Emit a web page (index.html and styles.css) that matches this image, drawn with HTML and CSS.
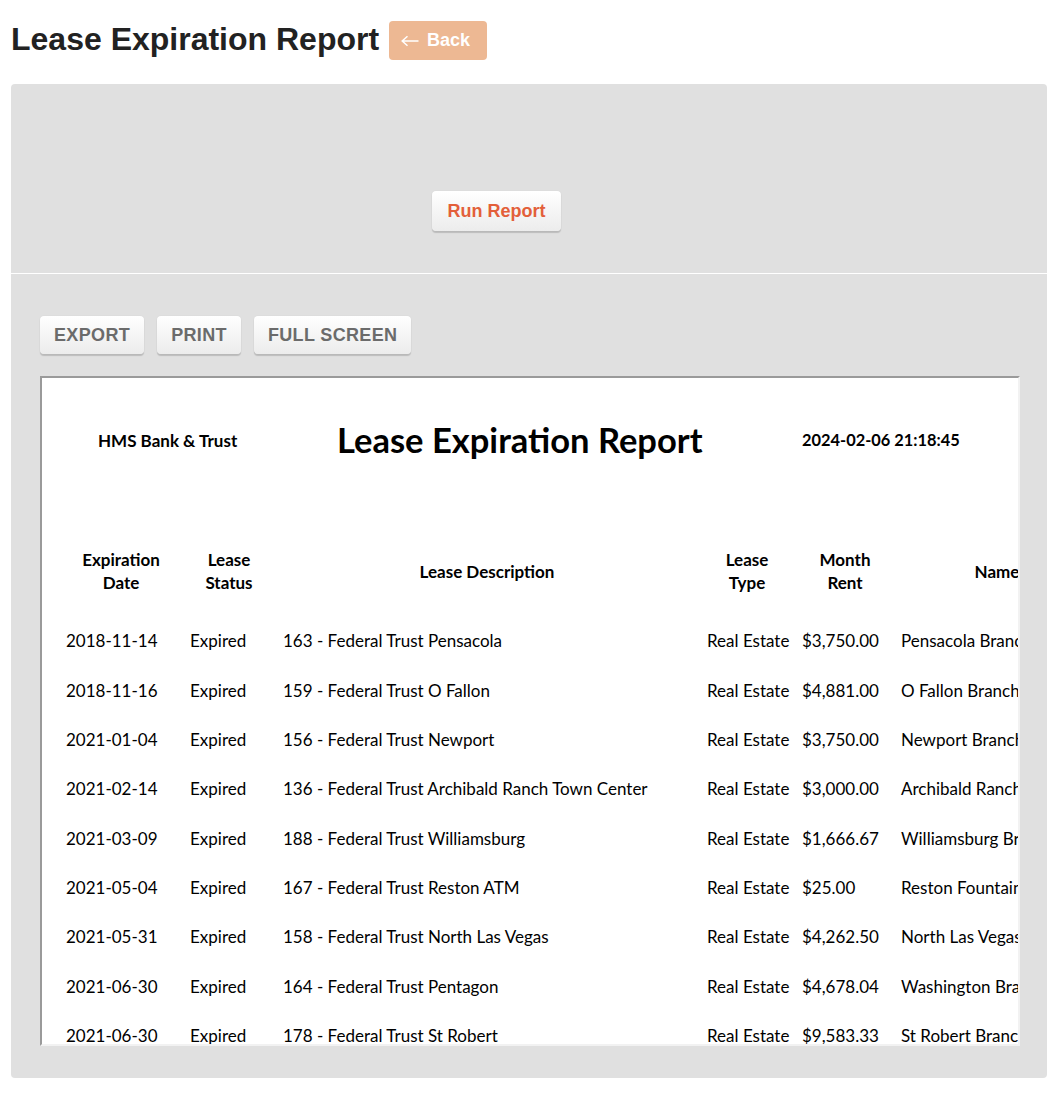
FILE: index.html
```html
<!DOCTYPE html>
<html>
<head>
<meta charset="utf-8">
<link rel="stylesheet" href="styles.css">
</head>
<body>
<header class="page-head">
  <h1 class="page-title">Lease Expiration Report</h1>
  <button class="back-btn"><svg class="arrow" width="18" height="12" viewBox="0 0 18 12"><path d="M17.5 6H1.5M6.5 1.2L1.2 6l5.3 4.8" fill="none" stroke="#fff" stroke-width="1.5"/></svg><span>Back</span></button>
</header>
<main class="panel">
  <section class="params">
    <button class="btn run-btn">Run Report</button>
  </section>
  <section class="output">
    <div class="toolbar">
      <button class="btn tool-btn">EXPORT</button>
      <button class="btn tool-btn">PRINT</button>
      <button class="btn tool-btn">FULL SCREEN</button>
    </div>
    <div class="report-frame">
      <div class="report">
        <div class="report-head">
          <div class="rh-company">HMS Bank &amp; Trust</div>
          <div class="rh-title">Lease Expiration Report</div>
          <div class="rh-date">2024-02-06 21:18:45</div>
        </div>
        <table class="rtable">
          <colgroup>
            <col class="c1"><col class="c2"><col class="c3"><col class="c4"><col class="c5"><col class="c6">
          </colgroup>
          <thead>
            <tr>
              <th>Expiration<br>Date</th>
              <th>Lease<br>Status</th>
              <th>Lease Description</th>
              <th>Lease<br>Type</th>
              <th>Month<br>Rent</th>
              <th>Name</th>
            </tr>
          </thead>
          <tbody>
            <tr><td class="d1">2018-11-14</td><td class="d2">Expired</td><td class="d3">163 - Federal Trust Pensacola</td><td class="d4">Real Estate</td><td class="d5">$3,750.00</td><td class="d6">Pensacola Branch</td></tr>
            <tr><td class="d1">2018-11-16</td><td class="d2">Expired</td><td class="d3">159 - Federal Trust O Fallon</td><td class="d4">Real Estate</td><td class="d5">$4,881.00</td><td class="d6">O Fallon Branch</td></tr>
            <tr><td class="d1">2021-01-04</td><td class="d2">Expired</td><td class="d3">156 - Federal Trust Newport</td><td class="d4">Real Estate</td><td class="d5">$3,750.00</td><td class="d6">Newport Branch</td></tr>
            <tr><td class="d1">2021-02-14</td><td class="d2">Expired</td><td class="d3">136 - Federal Trust Archibald Ranch Town Center</td><td class="d4">Real Estate</td><td class="d5">$3,000.00</td><td class="d6">Archibald Ranch</td></tr>
            <tr><td class="d1">2021-03-09</td><td class="d2">Expired</td><td class="d3">188 - Federal Trust Williamsburg</td><td class="d4">Real Estate</td><td class="d5">$1,666.67</td><td class="d6">Williamsburg Branch</td></tr>
            <tr><td class="d1">2021-05-04</td><td class="d2">Expired</td><td class="d3">167 - Federal Trust Reston ATM</td><td class="d4">Real Estate</td><td class="d5">$25.00</td><td class="d6">Reston Fountain</td></tr>
            <tr><td class="d1">2021-05-31</td><td class="d2">Expired</td><td class="d3">158 - Federal Trust North Las Vegas</td><td class="d4">Real Estate</td><td class="d5">$4,262.50</td><td class="d6">North Las Vegas</td></tr>
            <tr><td class="d1">2021-06-30</td><td class="d2">Expired</td><td class="d3">164 - Federal Trust Pentagon</td><td class="d4">Real Estate</td><td class="d5">$4,678.04</td><td class="d6">Washington Branch</td></tr>
            <tr><td class="d1">2021-06-30</td><td class="d2">Expired</td><td class="d3">178 - Federal Trust St Robert</td><td class="d4">Real Estate</td><td class="d5">$9,583.33</td><td class="d6">St Robert Branch</td></tr>
            <tr><td class="d1">2021-07-31</td><td class="d2">Expired</td><td class="d3">171 - Federal Trust Springfield</td><td class="d4">Real Estate</td><td class="d5">$2,500.00</td><td class="d6">Springfield Branch</td></tr>
          </tbody>
        </table>
      </div>
    </div>
  </section>
</main>
</body>
</html>
```

FILE: styles.css
```css
* { box-sizing: border-box; }
html, body { margin: 0; padding: 0; background: #fff; }
body {
  font-family: "Liberation Sans", Arial, sans-serif;
  color: #222;
  width: 1058px;
  height: 1098px;
  overflow: hidden;
}
.page-head {
  display: flex;
  align-items: center;
  gap: 10px;
  padding: 21px 0 0 11px;
  height: 60px;
}
.page-title {
  margin: 0;
  font-size: 32px;
  font-weight: bold;
  color: #222;
  line-height: 36px;
  margin-top: -4px;
}
.back-btn {
  display: flex;
  align-items: center;
  height: 39px;
  width: 98px;
  border: none;
  border-radius: 4px;
  background: #edb893;
  color: #fff;
  font-family: "Liberation Sans", Arial, sans-serif;
  font-weight: bold;
  font-size: 18px;
  padding: 0 0 0 12px;
  gap: 8px;
}
.arrow { display: block; margin-top: 1px; }
.panel {
  margin: 24px 11px 0 11px;
  height: 994px;
  background: #e0e0e0;
  border-radius: 4px;
}
.params {
  height: 190px;
  padding: 107px 0 0 421px;
  border-bottom: 1px solid #fff;
}
.btn {
  border: none;
  border-radius: 4px;
  background: linear-gradient(#ffffff, #ececec);
  box-shadow: 0 2px 1px rgba(0,0,0,0.16), 0 0 1px rgba(0,0,0,0.12);
  font-family: "Liberation Sans", Arial, sans-serif;
  font-weight: bold;
  font-size: 18px;
  padding: 0;
}
.run-btn {
  width: 129px;
  height: 40px;
  color: #e35f3a;
}
.output {
  padding: 42px 27px 0 29px;
}
.toolbar {
  display: flex;
  gap: 13px;
  height: 60px;
}
.tool-btn {
  height: 38px;
  color: #6b6b6b;
  padding: 0 14px;
  letter-spacing: 0.35px;
}
.report-frame {
  width: 980px;
  height: 670px;
  background: #fff;
  border-top: 2px solid #9a9a9a;
  border-left: 2px solid #9a9a9a;
  border-right: 2px solid #f2f2f2;
  border-bottom: 2px solid #f2f2f2;
  overflow: hidden;
}
.report {
  width: 1100px;
  font-family: Lato, "Open Sans", sans-serif;
  color: #000;
}
.report-head {
  position: relative;
  height: 148px;
}
.rh-company, .rh-title, .rh-date {
  position: absolute;
  font-weight: bold;
  white-space: nowrap;
}
.rh-company {
  top: 52px;
  left: 56px;
  font-size: 17px;
}
.rh-title {
  top: 41px;
  left: 295px;
  font-size: 34.5px;
}
.rh-date {
  top: 52px;
  left: 760px;
  font-size: 16.4px;
}
.rtable {
  margin-left: 14px;
  border-collapse: collapse;
  table-layout: fixed;
  width: 1040px;
}
.c1 { width: 130px; }
.c2 { width: 86px; }
.c3 { width: 430px; }
.c4 { width: 90px; }
.c5 { width: 106px; }
.c6 { width: 198px; }
.rtable th {
  height: 90px;
  font-size: 17px;
  font-weight: bold;
  line-height: 23px;
  text-align: center;
  vertical-align: middle;
  padding: 0;
}
.rtable td {
  height: 49.375px;
  font-size: 17px;
  padding: 0;
  vertical-align: middle;
  white-space: nowrap;
  overflow: hidden;
}
.d1 { padding-left: 10px !important; }
.d2 { padding-left: 4px !important; }
.d3 { padding-left: 11px !important; }
.d4 { padding-left: 5px !important; }
.d5 { padding-left: 10px !important; }
.d6 { padding-left: 3px !important; }
```
